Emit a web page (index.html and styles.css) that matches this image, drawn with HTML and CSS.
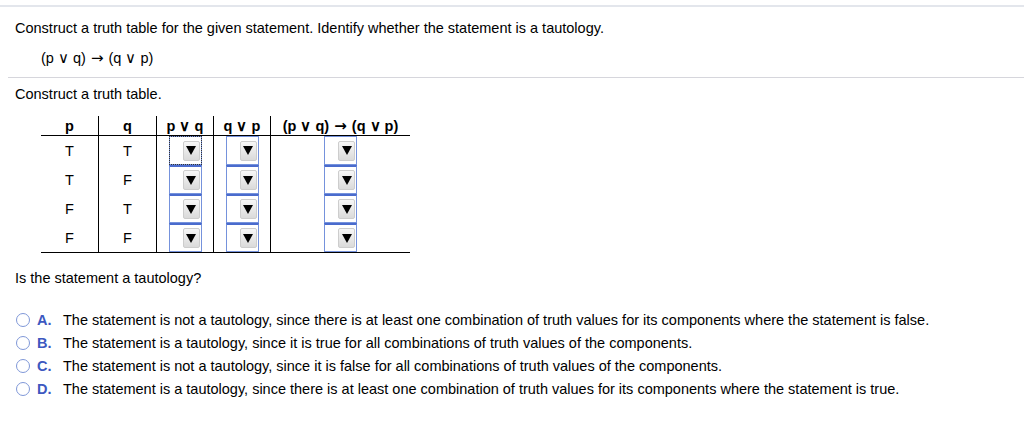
FILE: index.html
```html
<!DOCTYPE html>
<html>
<head>
<meta charset="utf-8">
<link rel="stylesheet" href="styles.css">
</head>
<body>
<div class="page">
  <div class="topline"></div>
  <p class="prompt">Construct a truth table for the given statement. Identify whether the statement is a tautology.</p>
  <p class="formula">(p ∨ q) <span class="arr">→</span> (q ∨ p)</p>
  <div class="sep"></div>
  <p class="sub">Construct a truth table.</p>
  <table class="tt">
    <thead>
      <tr><th class="c1">p</th><th class="c2">q</th><th class="c3">p ∨ q</th><th class="c4">q ∨ p</th><th class="c5">(p ∨ q) <span class="arr">→</span> (q ∨ p)</th></tr>
    </thead>
    <tbody>
      <tr><td>T</td><td>T</td><td><span class="dd focus"><span class="btn"><span class="tri"></span></span></span></td><td><span class="dd"><span class="btn"><span class="tri"></span></span></span></td><td><span class="dd"><span class="btn"><span class="tri"></span></span></span></td></tr>
      <tr><td>T</td><td>F</td><td><span class="dd"><span class="btn"><span class="tri"></span></span></span></td><td><span class="dd"><span class="btn"><span class="tri"></span></span></span></td><td><span class="dd"><span class="btn"><span class="tri"></span></span></span></td></tr>
      <tr><td>F</td><td>T</td><td><span class="dd"><span class="btn"><span class="tri"></span></span></span></td><td><span class="dd"><span class="btn"><span class="tri"></span></span></span></td><td><span class="dd"><span class="btn"><span class="tri"></span></span></span></td></tr>
      <tr><td>F</td><td>F</td><td><span class="dd"><span class="btn"><span class="tri"></span></span></span></td><td><span class="dd"><span class="btn"><span class="tri"></span></span></span></td><td><span class="dd"><span class="btn"><span class="tri"></span></span></span></td></tr>
    </tbody>
  </table>
  <p class="question">Is the statement a tautology?</p>
  <ul class="opts">
    <li><span class="radio"></span><span class="let">A.</span><span class="txt">The statement is not a tautology, since there is at least one combination of truth values for its components where the statement is false.</span></li>
    <li><span class="radio"></span><span class="let">B.</span><span class="txt">The statement is a tautology, since it is true for all combinations of truth values of the components.</span></li>
    <li><span class="radio"></span><span class="let">C.</span><span class="txt">The statement is not a tautology, since it is false for all combinations of truth values of the components.</span></li>
    <li><span class="radio"></span><span class="let">D.</span><span class="txt">The statement is a tautology, since there is at least one combination of truth values for its components where the statement is true.</span></li>
  </ul>
</div>
</body>
</html>
```

FILE: styles.css
```css
html, body {
  margin: 0;
  padding: 0;
  background: #fff;
}
body {
  font-family: "Liberation Sans", Arial, sans-serif;
  font-size: 14.5px;
  color: #000;
}
.page {
  padding-top: 5px;
}
.topline {
  height: 2px;
  background: #e3e6ec;
}
p { margin: 0; }
.arr {
  font-family: "DejaVu Sans", sans-serif;
  font-size: 15px;
  margin: 0 1px;
}
.prompt {
  margin: 13px 0 0 15px;
  line-height: 17px;
}
.formula {
  margin: 13px 0 0 41px;
  line-height: 17px;
}
.sep {
  margin: 10px 0 0 8px;
  height: 1px;
  background: #d6d6dc;
}
.sub {
  margin: 8px 0 0 15px;
  line-height: 17px;
}
.tt {
  margin: 13px 0 0 41px;
  border-collapse: collapse;
  border-spacing: 0;
}
.tt th {
  font-weight: bold;
  height: 19px;
  padding: 0;
  text-align: center;
  border-bottom: 1px solid #000;
  vertical-align: middle;
  line-height: 14px;
  white-space: nowrap;
}
.tt th, .tt td {
  border-left: 1px solid #000;
}
.tt th:first-child, .tt td:first-child { border-left: none; }
.tt td {
  height: 29px;
  padding: 0;
  text-align: center;
  vertical-align: middle;
}
.tt tbody tr:last-child td {
  border-bottom: 1px solid #000;
}
.c1 { width: 57px; }
.c2 { width: 57px; }
.c3 { width: 56px; }
.c4 { width: 56px; }
.c5 { width: 139px; }
.dd {
  display: inline-flex;
  box-sizing: border-box;
  width: 33px;
  height: 29px;
  border: 1px solid #7592dc;
  vertical-align: middle;
  justify-content: flex-end;
  align-items: center;
  padding-right: 1px;
  background: #fff;
}
.tt tbody tr + tr .dd {
  border-top: 2px solid #4a6bcd;
}
.dd.focus {
  outline: 1px dotted #333;
  outline-offset: -1px;
}
.btn {
  box-sizing: border-box;
  display: flex;
  align-items: center;
  justify-content: center;
  width: 17px;
  height: 20px;
  background: linear-gradient(#f7f7f7, #dadada);
  border: 1px solid #cdcdcd;
  border-radius: 2px;
}
.tri {
  width: 0;
  height: 0;
  border-left: 5px solid transparent;
  border-right: 5px solid transparent;
  border-top: 9px solid #000;
}
.question {
  margin: 17px 0 0 15px;
  line-height: 17px;
}
.opts {
  list-style: none;
  margin: 21px 0 0 0;
  padding: 0;
}
.opts li {
  display: flex;
  align-items: center;
  height: 23px;
  padding-left: 16px;
}
.radio {
  box-sizing: border-box;
  width: 14px;
  height: 14px;
  border: 1.5px solid #7f98d8;
  border-radius: 50%;
  margin-right: 7px;
}
.let {
  width: 26px;
  font-weight: bold;
  color: #3d58c0;
}
.txt {
  white-space: nowrap;
}
```
